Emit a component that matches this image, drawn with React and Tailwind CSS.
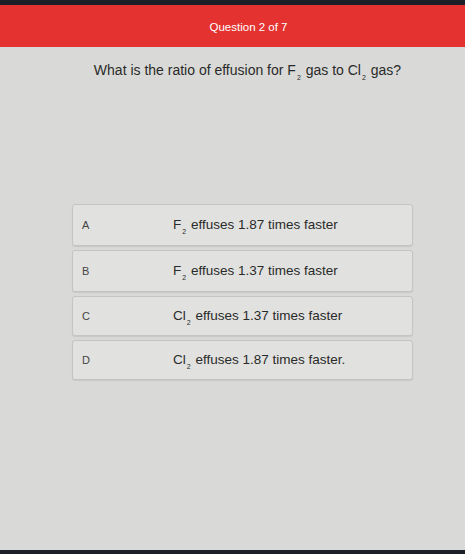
import React from 'react';

const options = [
  { key: 'A', el: 'F', sub: '2', text: 'effuses 1.87 times faster', h: 'h-[42px]' },
  { key: 'B', el: 'F', sub: '2', text: 'effuses 1.37 times faster', h: 'h-[42px]' },
  { key: 'C', el: 'Cl', sub: '2', text: 'effuses 1.37 times faster', h: 'h-[40px]' },
  { key: 'D', el: 'Cl', sub: '2', text: 'effuses 1.87 times faster.', h: 'h-[40px]' },
];

const Formula = ({ el, sub }) => (
  <span>
    {el}
    <sub className="text-[7px] align-[-3px] mx-[1px]">{sub}</sub>
  </span>
);

const App = () => {
  return (
    <div
      className="w-[465px] h-[554px] flex flex-col bg-[#d9dad7] overflow-hidden"
      style={{ fontFamily: '"Liberation Sans", Arial, sans-serif' }}
    >
      <div className="h-[5px] bg-[#1c1f27]" />
      <div className="h-[42px] bg-[#e3322f] flex items-center justify-center">
        <span className="text-white text-[11.5px] pt-[4px] pl-[32px]">Question 2 of 7</span>
      </div>

      <div className="flex-1 flex flex-col">
        <p className="text-center text-[14px] text-[#2a2a2a] mt-[13px] pl-[30px]">
          What is the ratio of effusion for <Formula el="F" sub="2" /> gas to{' '}
          <Formula el="Cl" sub="2" /> gas?
        </p>

        <div className="mt-[123px] ml-[72px] w-[341px] flex flex-col gap-[4px]">
          {options.map((o) => (
            <div
              key={o.key}
              className={`${o.h} flex items-center bg-[#e1e2df] border border-[#c4c5c2] rounded-[3px] shadow-[0_1px_1px_rgba(0,0,0,0.08)]`}
            >
              <span className="w-[100px] pl-[9px] text-[11px] text-[#444]">{o.key}</span>
              <span className="text-[13.5px] text-[#2a2a2a]">
                <Formula el={o.el} sub={o.sub} /> {o.text}
              </span>
            </div>
          ))}
        </div>
      </div>

      <div className="h-[4px] bg-[#1c1f27]" />
    </div>
  );
};

export default App;
